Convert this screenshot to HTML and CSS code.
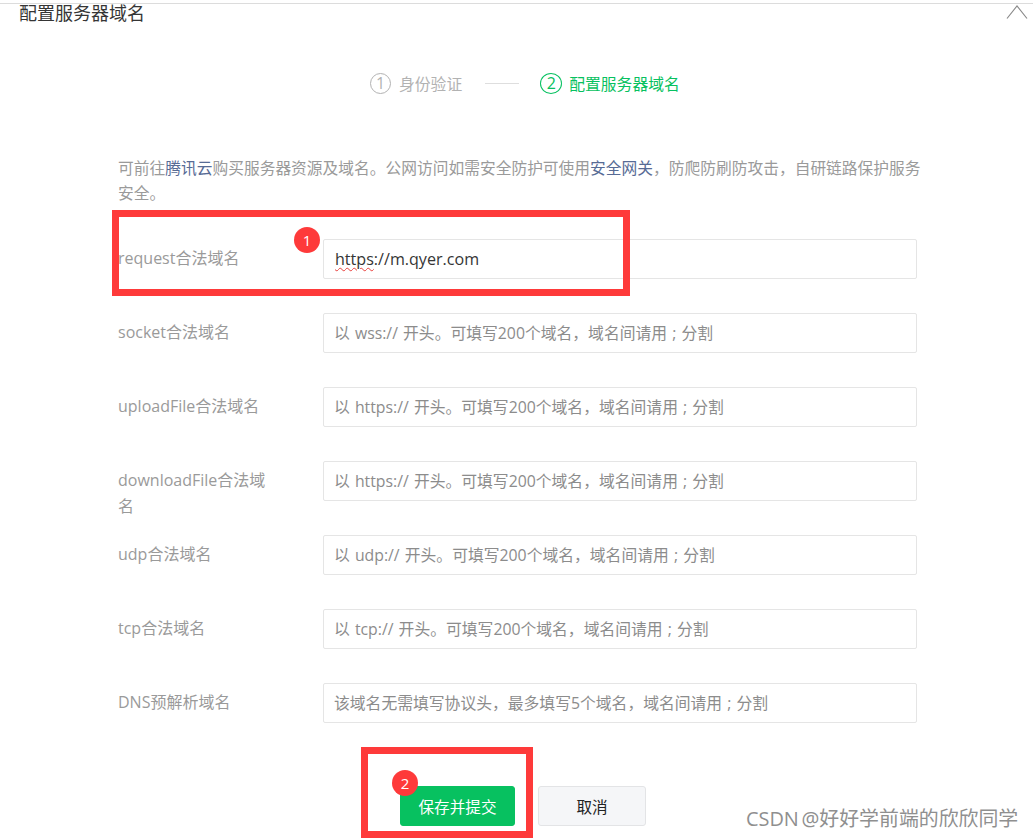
FILE: index.html
```html
<!DOCTYPE html>
<html lang="zh-CN">
<head>
<meta charset="utf-8">
<title>配置服务器域名</title>
<link rel="stylesheet" href="styles.css">
</head>
<body>
<div class="page">
  <header class="head">
    <h1 class="title">配置服务器域名</h1>
    <svg class="chev" width="22" height="14" viewBox="0 0 22 14"><path d="M1 13.5 11 1l10 12.5" fill="none" stroke="#8a8a8a" stroke-width="1.2"/></svg>
  </header>
  <div class="steps">
    <span class="num">1</span><span class="step-text">身份验证</span>
    <span class="step-line"></span>
    <span class="num on">2</span><span class="step-text on">配置服务器域名</span>
  </div>
  <p class="desc">可前往<a class="link">腾讯云</a>购买服务器资源及域名。公网访问如需安全防护可使用<a class="link">安全网关</a>，防爬防刷防攻击，自研链路保护服务安全。</p>
  <div class="form">
    <div class="row"><div class="label">request合法域名</div><div class="field filled"><span class="typo">https</span>://m.qyer.com</div></div>
    <div class="row"><div class="label">socket合法域名</div><div class="field">以 wss:// 开头。可填写200个域名，域名间请用 ; 分割</div></div>
    <div class="row"><div class="label">uploadFile合法域名</div><div class="field">以 https:// 开头。可填写200个域名，域名间请用 ; 分割</div></div>
    <div class="row"><div class="label">downloadFile合法域名</div><div class="field">以 https:// 开头。可填写200个域名，域名间请用 ; 分割</div></div>
    <div class="row"><div class="label">udp合法域名</div><div class="field">以 udp:// 开头。可填写200个域名，域名间请用 ; 分割</div></div>
    <div class="row"><div class="label">tcp合法域名</div><div class="field">以 tcp:// 开头。可填写200个域名，域名间请用 ; 分割</div></div>
    <div class="row"><div class="label">DNS预解析域名</div><div class="field">该域名无需填写协议头，最多填写5个域名，域名间请用 ; 分割</div></div>
  </div>
  <div class="actions">
    <button class="btn primary">保存并提交</button>
    <button class="btn">取消</button>
  </div>
  <div class="mark box-one"></div>
  <div class="mark box-two"></div>
  <div class="badge badge-one">1</div>
  <div class="badge badge-two">2</div>
  <div class="watermark">CSDN @好好学前端的欣欣同学</div>
</div>
</body>
</html>
```
FILE: styles.css
```css
* { box-sizing: border-box; }
html, body { margin: 0; padding: 0; background: #fff; }
body { font-family: "Open Sans", "Noto Sans CJK SC", sans-serif; color: #9a9a9a; }
.page { position: relative; width: 1033px; height: 838px; overflow: hidden; }
.head {
  display: flex; justify-content: space-between; align-items: flex-start;
  margin-top: 3px; height: 40px; padding: 0 5px 0 19px;
  border-top: 1px solid #dcdcdc;
}
.title { margin: 0; font-size: 18px; font-weight: 400; line-height: 18px; color: #353535; }
.chev { margin-top: 1px; }
.steps {
  display: flex; align-items: center; height: 22px; margin-top: 29px; padding-left: 370px;
  font-size: 15.8px; color: #b2b2b2;
}
.num {
  width: 21px; height: 21px; border: 1px solid #b2b2b2; border-radius: 50%;
  display: flex; align-items: center; justify-content: center; font-size: 16px; line-height: 1;
  margin-right: 8px;
}
.num.on { width: 22px; border-color: #07c160; color: #07c160; margin-right: 7px; }
.step-text.on { color: #07c160; }
.step-line { width: 34px; height: 1px; background: #dedede; margin: 0 21px 0 23px; }
.desc {
  margin: 62px 0 0; padding: 0 110px 0 118px; font-size: 15.74px; line-height: 25px; color: #9a9a9a;
}
.link { color: #576b95; }
.form { margin-top: 33px; padding-left: 118px; }
.row { display: flex; height: 74px; }
.label { width: 205px; padding: 6px 50px 0 0; font-size: 16px; line-height: 26px; color: #9a9a9a; }
.field {
  width: 594px; height: 40px; padding: 0 10px 1px; display: flex; align-items: center; white-space: pre;
  border: 1px solid #e5e5e5; border-radius: 2px; font-size: 15.8px; color: #8c8c8c; word-spacing: 1px;
}
.field.filled { padding: 0 11px; font-size: 16.1px; color: #353535; }
.typo { text-decoration: underline wavy #e8413e 1px; text-underline-offset: 2px; }
.actions { display: flex; gap: 23px; margin-top: 29px; padding-left: 400px; }
.btn {
  width: 108px; height: 40px; padding: 0; border: 1px solid #e3e4e6; border-radius: 3px;
  background: #f5f6f8; color: #222; font: inherit; font-size: 15.6px;
}
.primary { width: 115px; background: #07c160; border-color: #07c160; color: #fff; }
.mark { position: absolute; border: 7px solid #fe3a3a; pointer-events: none; }
.box-one { left: 112px; top: 210px; width: 518px; height: 86px; }
.box-two { left: 361px; top: 747px; width: 172px; height: 91px; }
.badge {
  position: absolute; width: 26px; height: 26px; border-radius: 50%; background: #fe3a3a; color: #fff;
  display: flex; align-items: center; justify-content: center; font-size: 15px; line-height: 1;
}
.badge-one { left: 294px; top: 227px; }
.badge-two { left: 392px; top: 770px; }
.watermark {
  position: absolute; left: 746px; top: 805px; font-size: 19.9px; line-height: 28px; color: #8f8f8f;
  white-space: nowrap; word-spacing: -2.5px;
}
```
